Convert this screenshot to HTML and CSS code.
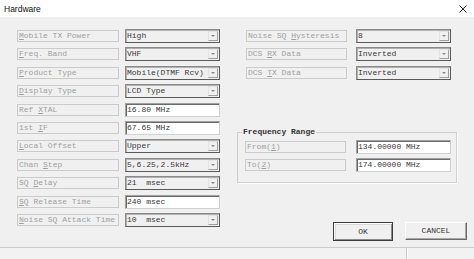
FILE: index.html
```html
<!DOCTYPE html>
<html lang="en">
<head>
    <meta charset="UTF-8">
    <title>Hardware</title>
    <link rel="stylesheet" href="styles.css">
</head>
<body>
    <div class="window">
        <div class="titlebar">
            <span class="title">Hardware</span>
            <svg class="close" width="8" height="8" viewBox="0 0 8 8">
                <path d="M0.5 0.5 L7.5 7.5 M7.5 0.5 L0.5 7.5" stroke="#333" stroke-width="1" fill="none"/>
            </svg>
        </div>

        <div class="client">
            <div class="col-left">
                <div class="row"><span class="label"><u>M</u>obile TX Power</span><span class="combo">High<i class="arrow"></i></span></div>
                <div class="row"><span class="label"><u>F</u>req. Band</span><span class="combo">VHF<i class="arrow"></i></span></div>
                <div class="row"><span class="label"><u>P</u>roduct Type</span><span class="combo">Mobile(DTMF Rcv)<i class="arrow"></i></span></div>
                <div class="row"><span class="label"><u>D</u>isplay Type</span><span class="combo">LCD Type<i class="arrow"></i></span></div>
                <div class="row"><span class="label">Ref <u>X</u>TAL</span><span class="edit">16.80 MHz</span></div>
                <div class="row"><span class="label">1st <u>I</u>F</span><span class="edit">67.65 MHz</span></div>
                <div class="row"><span class="label"><u>L</u>ocal Offset</span><span class="combo">Upper<i class="arrow"></i></span></div>
                <div class="row"><span class="label">Chan <u>S</u>tep</span><span class="combo">5,6.25,2.5kHz<i class="arrow"></i></span></div>
                <div class="row"><span class="label">SQ <u>D</u>elay</span><span class="combo">21  msec<i class="arrow"></i></span></div>
                <div class="row"><span class="label"><u>S</u>Q Release Time</span><span class="edit">240 msec</span></div>
                <div class="row"><span class="label"><u>N</u>oise SQ Attack Time</span><span class="combo">10  msec<i class="arrow"></i></span></div>
            </div>

            <div class="col-right">
                <div class="row wide"><span class="label">Noise SQ <u>H</u>ysteresis</span><span class="combo">8<i class="arrow"></i></span></div>
                <div class="row wide"><span class="label">DCS <u>R</u>X Data</span><span class="combo">Inverted<i class="arrow"></i></span></div>
                <div class="row wide"><span class="label">DCS <u>T</u>X Data</span><span class="combo">Inverted<i class="arrow"></i></span></div>

                <fieldset class="group">
                    <legend>Frequency Range</legend>
                    <div class="group-body">
                        <div class="row wide"><span class="label">From(<u>1</u>)</span><span class="edit">134.00000 MHz</span></div>
                        <div class="row wide"><span class="label">To(<u>2</u>)</span><span class="edit">174.00000 MHz</span></div>
                    </div>
                </fieldset>

                <div class="buttons">
                    <button class="btn default">OK</button>
                    <button class="btn cancel">CANCEL</button>
                </div>
            </div>
        </div>

        <div class="statusbar">
            <div class="panel main"></div>
            <div class="panel"></div>
        </div>
    </div>
</body>
</html>
```

FILE: styles.css
```css
* {
    margin: 0;
    padding: 0;
    box-sizing: border-box;
}

body {
    width: 474px;
    height: 259px;
    overflow: hidden;
    background-color: #f0f0f0;
    font-family: "Liberation Mono", "Courier New", monospace;
    font-size: 8px;
    color: #333;
}

.window {
    display: flex;
    flex-direction: column;
    height: 259px;
}

/* title bar */
.titlebar {
    height: 17px;
    background-color: #fff;
    display: flex;
    align-items: center;
    justify-content: space-between;
    padding: 0 7px 0 4px;
}

.title {
    font-family: "Liberation Sans", Arial, sans-serif;
    font-size: 8.5px;
    color: #111;
}

/* client area */
.client {
    height: 230px;
    display: flex;
}

.col-left {
    width: 237px;
    padding: 12px 0 0 17px;
    display: flex;
    flex-direction: column;
    gap: 4.4px;
}

.col-right {
    padding-top: 12px;
    display: flex;
    flex-direction: column;
    gap: 4.4px;
}

.row {
    height: 14px;
    display: flex;
    align-items: center;
    gap: 6px;
}

.row.wide {
    gap: 9px;
}

.col-right > .row {
    padding-left: 9px;
}

.label {
    width: 102px;
    height: 12px;
    line-height: 10px;
    padding-left: 1px;
    border: 1px solid #cbcbcb;
    color: #a0a0a0;
    white-space: pre;
}

.row.wide .label {
    width: 101px;
}

.label u {
    text-decoration-color: #a0a0a0;
}

.combo,
.edit {
    position: relative;
    width: 95px;
    height: 14px;
    line-height: 12px;
    padding-left: 1px;
    border: 1px solid #8a8a8a;
    border-right-color: #5a5a5a;
    border-bottom-color: #5a5a5a;
    box-shadow: inset 1px 1px 0 #b0b0b0;
    color: #3a3a3a;
    white-space: pre;
    background-color: #f0f0f0;
}

.edit {
    background-color: #fff;
    border-color: #a0a0a0;
    border-right-color: #d0d0d0;
    border-bottom-color: #d0d0d0;
    box-shadow: inset 1px 1px 0 #6a6a6a;
}

.arrow {
    position: absolute;
    top: 1px;
    right: 1px;
    width: 10px;
    height: 10px;
    border-left: 1px solid #e4e4e4;
    border-top: 1px solid #e4e4e4;
    border-right: 1px solid #a0a0a0;
    border-bottom: 1px solid #a0a0a0;
}

.arrow::after {
    content: "";
    position: absolute;
    left: 2px;
    top: 3px;
    border-left: 2px solid transparent;
    border-right: 2px solid transparent;
    border-top: 2px solid #888;
}

/* frequency range group */
.group {
    width: 220px;
    margin-top: 43px;
    border: 1px solid #cfcfcf;
    box-shadow: 1px 1px 0 #fff;
    padding: 0;
}

.group legend {
    margin-left: 4px;
    padding: 0 1px;
    font-weight: bold;
    line-height: 10px;
    color: #333;
}

.group-body {
    padding: 3px 0 10px 7px;
    display: flex;
    flex-direction: column;
    gap: 4px;
}

.group .row.wide {
    gap: 10px;
}

.group .label {
    width: 101px;
}

/* buttons */
.buttons {
    margin-top: 34px;
    padding-left: 96px;
    display: flex;
    gap: 12px;
    align-items: flex-start;
}

.btn {
    font-family: "Liberation Mono", "Courier New", monospace;
    font-size: 8px;
    color: #333;
    background-color: #f0f0f0;
}

.btn.default {
    width: 60px;
    height: 19px;
    border: 1px solid #3c3c3c;
    box-shadow: inset 1px 1px 0 #fff, inset -1px -1px 0 #8a8a8a, inset 2px 2px 0 #d8d8d8;
}

.btn.cancel {
    width: 62px;
    height: 18px;
    border: 1px solid #fff;
    border-right-color: #6a6a6a;
    border-bottom-color: #6a6a6a;
    box-shadow: inset -1px -1px 0 #a8a8a8;
}

/* status bar */
.statusbar {
    flex: 1;
    display: flex;
    border-top: 1px solid #cdcdcd;
    background-color: #f2f2f2;
}

.panel.main {
    width: 407px;
    border-right: 1px solid #c8c8c8;
    box-shadow: 1px 0 0 #fff;
}
```
